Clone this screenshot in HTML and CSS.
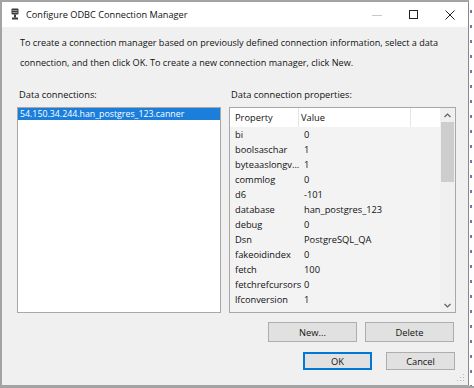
FILE: index.html
```html
<!DOCTYPE html>
<html>
<head>
<meta charset="utf-8">
<link rel="stylesheet" href="styles.css">
</head>
<body>
<div class="desk">
  <div class="window">
    <div class="titlebar">
      <svg class="appicon" width="8" height="13" viewBox="0 0 8 13">
        <rect x="0.5" y="0.5" width="7" height="6" rx="1" fill="#3c3c3c"/>
        <rect x="1.5" y="2" width="5" height="1" fill="#9a9a9a"/>
        <rect x="1.5" y="4" width="5" height="1" fill="#9a9a9a"/>
        <rect x="3" y="6.5" width="2" height="3" fill="#3c3c3c"/>
        <rect x="1" y="9.5" width="6" height="2" fill="#3c3c3c"/>
      </svg>
      <span class="title">Configure ODBC Connection Manager</span>
      <div class="controls">
        <span class="ctl min"><svg width="10" height="10" viewBox="0 0 10 10"><line x1="0" y1="5.5" x2="10" y2="5.5" stroke="#c8c8c8" stroke-width="1"/></svg></span>
        <span class="ctl max"><svg width="9" height="9" viewBox="0 0 9 9"><rect x="0.5" y="0.5" width="8" height="8" fill="none" stroke="#222" stroke-width="1"/></svg></span>
        <span class="ctl close"><svg width="10" height="10" viewBox="0 0 10 10"><path d="M0.5 0.5 L9.5 9.5 M9.5 0.5 L0.5 9.5" stroke="#222" stroke-width="1"/></svg></span>
      </div>
    </div>
    <div class="content">
      <p class="desc">To create a connection manager based on previously defined connection information, select a data<br>connection, and then click OK. To create a new connection manager, click New.</p>
      <div class="panels">
        <div class="col">
          <div class="label">Data connections:</div>
          <div class="listbox">
            <div class="item selected">54.150.34.244.han_postgres_123.canner</div>
          </div>
        </div>
        <div class="col">
          <div class="label">Data connection properties:</div>
          <div class="grid">
            <div class="table">
              <div class="row head"><span class="c1">Property</span><span class="c2">Value</span><span class="c3"></span></div>
              <div class="row"><span class="c1">bi</span><span class="c2">0</span></div>
              <div class="row"><span class="c1">boolsaschar</span><span class="c2">1</span></div>
              <div class="row"><span class="c1">byteaaslongv...</span><span class="c2">1</span></div>
              <div class="row"><span class="c1">commlog</span><span class="c2">0</span></div>
              <div class="row"><span class="c1">d6</span><span class="c2">-101</span></div>
              <div class="row"><span class="c1">database</span><span class="c2">han_postgres_123</span></div>
              <div class="row"><span class="c1">debug</span><span class="c2">0</span></div>
              <div class="row"><span class="c1">Dsn</span><span class="c2">PostgreSQL_QA</span></div>
              <div class="row"><span class="c1">fakeoidindex</span><span class="c2">0</span></div>
              <div class="row"><span class="c1">fetch</span><span class="c2">100</span></div>
              <div class="row"><span class="c1">fetchrefcursors</span><span class="c2">0</span></div>
              <div class="row"><span class="c1">lfconversion</span><span class="c2">1</span></div>
            </div>
            <div class="scrollbar">
              <div class="arrow"><svg width="7" height="5" viewBox="0 0 7 5"><path d="M0.5 4 L3.5 1 L6.5 4" fill="none" stroke="#606060" stroke-width="1.2"/></svg></div>
              <div class="thumb"></div>
              <div class="track"></div>
              <div class="arrow"><svg width="7" height="5" viewBox="0 0 7 5"><path d="M0.5 1 L3.5 4 L6.5 1" fill="none" stroke="#606060" stroke-width="1.2"/></svg></div>
            </div>
          </div>
        </div>
      </div>
      <div class="btnrow row1">
        <button class="btn wide">New...</button>
        <button class="btn wide">Delete</button>
      </div>
      <div class="btnrow row2">
        <button class="btn small default">OK</button>
        <button class="btn small">Cancel</button>
      </div>
    </div>
    <svg class="grip" width="8" height="8" viewBox="0 0 8 8">
      <rect x="6" y="0" width="1" height="1" fill="#b5b5b5"/>
      <rect x="3" y="3" width="1" height="1" fill="#b5b5b5"/>
      <rect x="6" y="3" width="1" height="1" fill="#b5b5b5"/>
      <rect x="0" y="6" width="1" height="1" fill="#b5b5b5"/>
      <rect x="3" y="6" width="1" height="1" fill="#b5b5b5"/>
      <rect x="6" y="6" width="1" height="1" fill="#b5b5b5"/>
    </svg>
  </div>
  <div class="outside"></div>
</div>
</body>
</html>
```
FILE: styles.css
```css
html, body {
  margin: 0;
  padding: 0;
}
body {
  width: 474px;
  height: 388px;
  overflow: hidden;
  background: #a3a3a3;
  font-family: "Open Sans", "Noto Sans", sans-serif;
  font-size: 9.3px;
  color: #111111;
}
.desk {
  display: flex;
  padding: 2px 0 0 2px;
  height: 386px;
  box-sizing: border-box;
}
.window {
  position: relative;
  width: 467px;
  height: 383px;
  background: #f0f0f0;
  border-right: 1px solid #8a8a8a;
  box-sizing: border-box;
  display: flex;
  flex-direction: column;
}
.outside {
  flex: 1;
  background: #ffffff repeating-linear-gradient(to bottom, transparent 0 10px, #6a78b4 10px 13px, transparent 13px 15px) no-repeat;
  background-size: 2px 100%;
  background-position: 1px 0;
  margin-top: -2px;
}
.titlebar {
  height: 25px;
  background: #ffffff;
  display: flex;
  align-items: center;
  padding-left: 9px;
}
.appicon {
  margin-right: 7px;
  margin-top: -1px;
}
.title {
  font-size: 9.2px;
  color: #111111;
}
.controls {
  margin-left: auto;
  display: flex;
  align-items: center;
  height: 100%;
}
.ctl {
  width: 36px;
  display: flex;
  justify-content: center;
  align-items: center;
}
.ctl.close { width: 37px; }
.content {
  padding: 0 14px 0 15px;
  display: flex;
  flex-direction: column;
}
.desc {
  margin: 6px 0 0 3px;
  line-height: 20px;
  font-size: 9.1px;
  white-space: nowrap;
}
.panels {
  display: flex;
  gap: 8px;
  margin-top: 15px;
}
.col {
  display: flex;
  flex-direction: column;
}
.label {
  margin-left: 2px;
  line-height: 14px;
  margin-bottom: 5px;
}
.listbox {
  width: 204px;
  height: 206px;
  background: #ffffff;
  border: 1px solid #a8a8a8;
  box-sizing: border-box;
}
.item {
  height: 12px;
  line-height: 12px;
  padding-left: 2px;
  font-size: 8.8px;
  white-space: nowrap;
}
.item.selected {
  background: #1b7edb;
  color: #ffffff;
}
.grid {
  width: 227px;
  height: 206px;
  border: 1px solid #a8a8a8;
  box-sizing: border-box;
  display: flex;
  background: #f3f3f3;
}
.table {
  flex: 1;
  display: flex;
  flex-direction: column;
}
.row {
  display: flex;
  height: 15px;
  line-height: 15px;
}
.row.head {
  height: 19px;
  line-height: 19px;
  background: #ffffff;
}
.c1 {
  width: 69px;
  padding-left: 5px;
  box-sizing: border-box;
  white-space: nowrap;
}
.c2 {
  padding-left: 5px;
  white-space: nowrap;
}
.row.head .c1 {
  border-right: 1px solid #e5e5e5;
}
.row.head .c2 {
  width: 112px;
  box-sizing: border-box;
  padding-left: 2px;
  border-right: 1px solid #e5e5e5;
}
.row.head .c3 {
  flex: 1;
}
.scrollbar {
  width: 15px;
  display: flex;
  flex-direction: column;
  background: #f0f0f0;
}
.arrow {
  height: 14px;
  display: flex;
  align-items: center;
  justify-content: center;
}
.thumb {
  height: 60px;
  margin: 0 1px;
  background: #cdcdcd;
}
.track {
  flex: 1;
}
.btnrow {
  display: flex;
  justify-content: flex-end;
}
.row1 {
  gap: 8px;
  margin-top: 9px;
}
.row2 {
  gap: 14px;
  margin-top: 10px;
  margin-right: -1px;
}
.btn {
  font-family: "Open Sans", "Noto Sans", sans-serif;
  font-size: 9.3px;
  color: #111111;
  background: #e1e1e1;
  border: 1px solid #adadad;
  padding: 0;
  margin: 0;
  box-sizing: border-box;
}
.btn.wide {
  width: 89px;
  height: 20px;
}
.btn.small {
  width: 69px;
  height: 18px;
}
.btn.default {
  border: 1px solid #0078d7;
  box-shadow: inset 0 0 0 1px #0078d7;
}
.grip {
  position: absolute;
  right: 3px;
  bottom: 3px;
}
```
